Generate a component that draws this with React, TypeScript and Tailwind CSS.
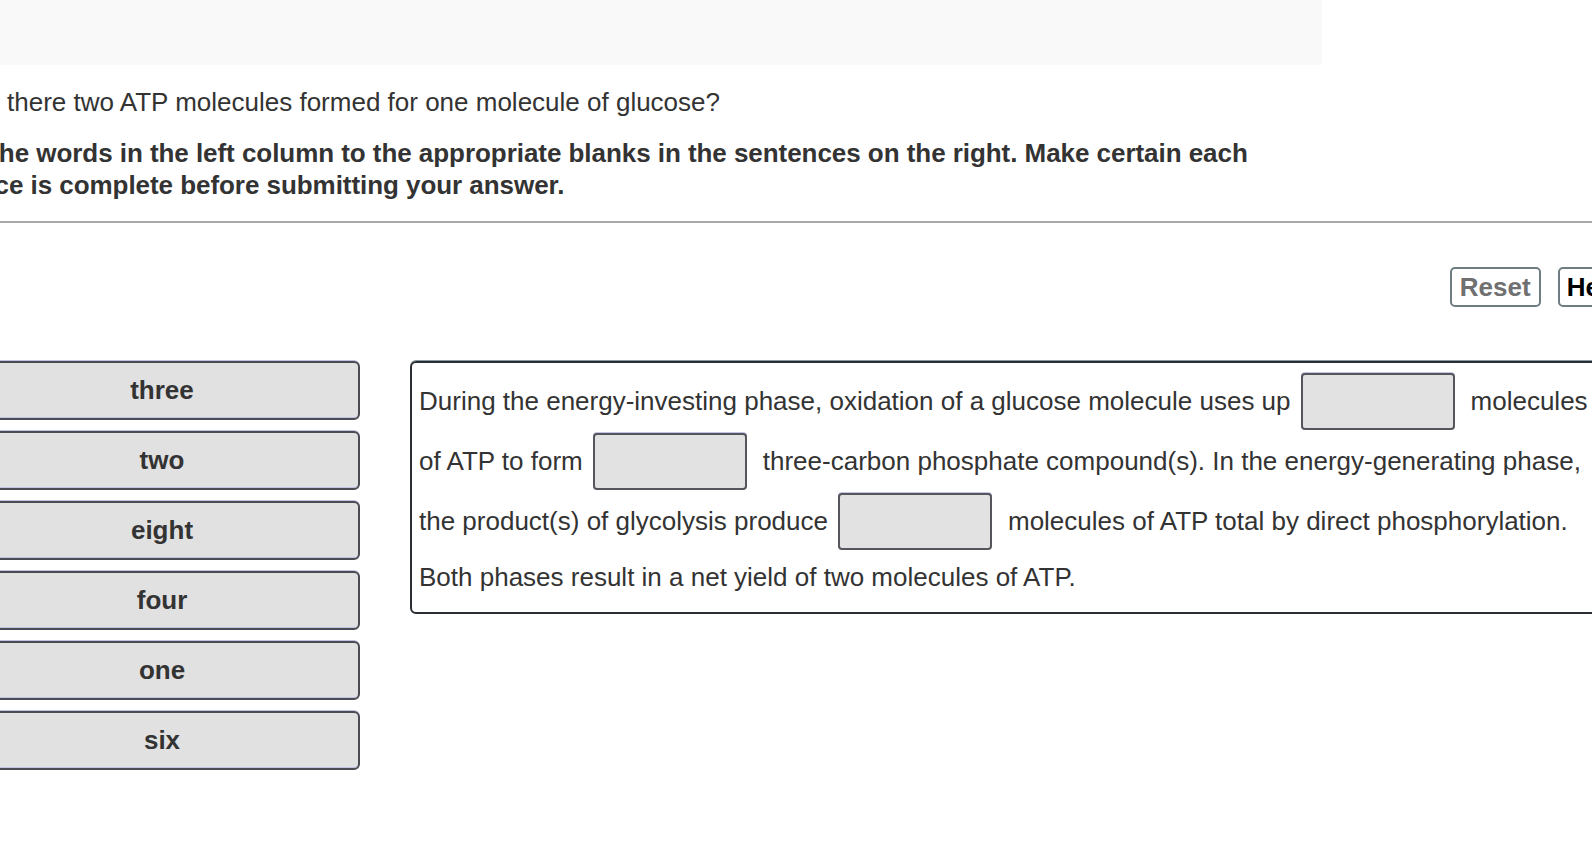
export default function App() {
  const words = ["three", "two", "eight", "four", "one", "six"];
  const blank =
    "shrink-0 w-[154px] h-[57px] bg-[#e2e2e2] border-2 border-[#55555c] rounded-[4px] ml-[10px] mr-[16px] shadow-[0_-1px_0_#c4c4e4]";
  return (
    <div className="w-[1592px] h-[842px] overflow-hidden bg-white text-[#333] font-['Liberation_Sans',Arial,sans-serif]">
      <div className="w-[1700px]">
        <div className="h-[65px] w-[1322px] bg-[#f9f9f9]" />
        <p className="mt-[22px] ml-[-97px] text-[26px] leading-[30px] whitespace-nowrap">
          Why are there two ATP molecules formed for one molecule of glucose?
        </p>
        <p className="mt-[20px] ml-[-89px] indent-[13px] text-[26px] leading-[32px] font-bold whitespace-nowrap tracking-[-0.05px]">
          Drag the words in the left column to the appropriate blanks in the sentences on the right. Make certain each
          <br />
          sentence is complete before submitting your answer.
        </p>
        <div className="mt-[20px] h-[2px] bg-[#a9a9a9]" />
        <div className="mt-[44px] flex justify-end gap-[17px] pr-[68px]">
          <button className="h-[40px] px-[8px] border-2 border-[#6f7d82] rounded-[5px] font-bold text-[26px] leading-none text-[#707070]">
            Reset
          </button>
          <button className="h-[40px] px-[7px] border-2 border-[#6f7d82] rounded-[5px] font-bold text-[26px] leading-none text-black">
            Help
          </button>
        </div>
        <div className="mt-[54px] flex items-start">
          <div className="ml-[-36px] w-[396px] shrink-0 flex flex-col gap-[11px]">
            {words.map((w) => (
              <div
                key={w}
                className="h-[59px] flex items-center justify-center bg-[#e1e1e1] border-2 border-[#4b4b52] rounded-[6px] shadow-[0_-1px_0_#c2c2e6,inset_0_-1px_0_#c2c2e6] font-bold text-[26px]"
              >
                {w}
              </div>
            ))}
          </div>
          <div className="ml-[50px] w-[1300px] shrink-0 border-2 border-[#2b2f33] rounded-[6px] shadow-[0_-1px_0_#8a9aa0] pl-[7px] pt-[8px] pb-[9px] text-[26px] whitespace-nowrap">
            <div className="flex items-center h-[60px]">
              <span>During the energy-investing phase, oxidation of a glucose molecule uses up</span>
              <div className={blank} />
              <span>molecules</span>
            </div>
            <div className="flex items-center h-[60px]">
              <span>of ATP to form</span>
              <div className={blank} />
              <span>three-carbon phosphate compound(s). In the energy-generating phase,</span>
            </div>
            <div className="flex items-center h-[60px]">
              <span>the product(s) of glycolysis produce</span>
              <div className={blank} />
              <span>molecules of ATP total by direct phosphorylation.</span>
            </div>
            <div className="flex items-center h-[52px]">
              <span>Both phases result in a net yield of two molecules of ATP.</span>
            </div>
          </div>
        </div>
      </div>
    </div>
  );
}
